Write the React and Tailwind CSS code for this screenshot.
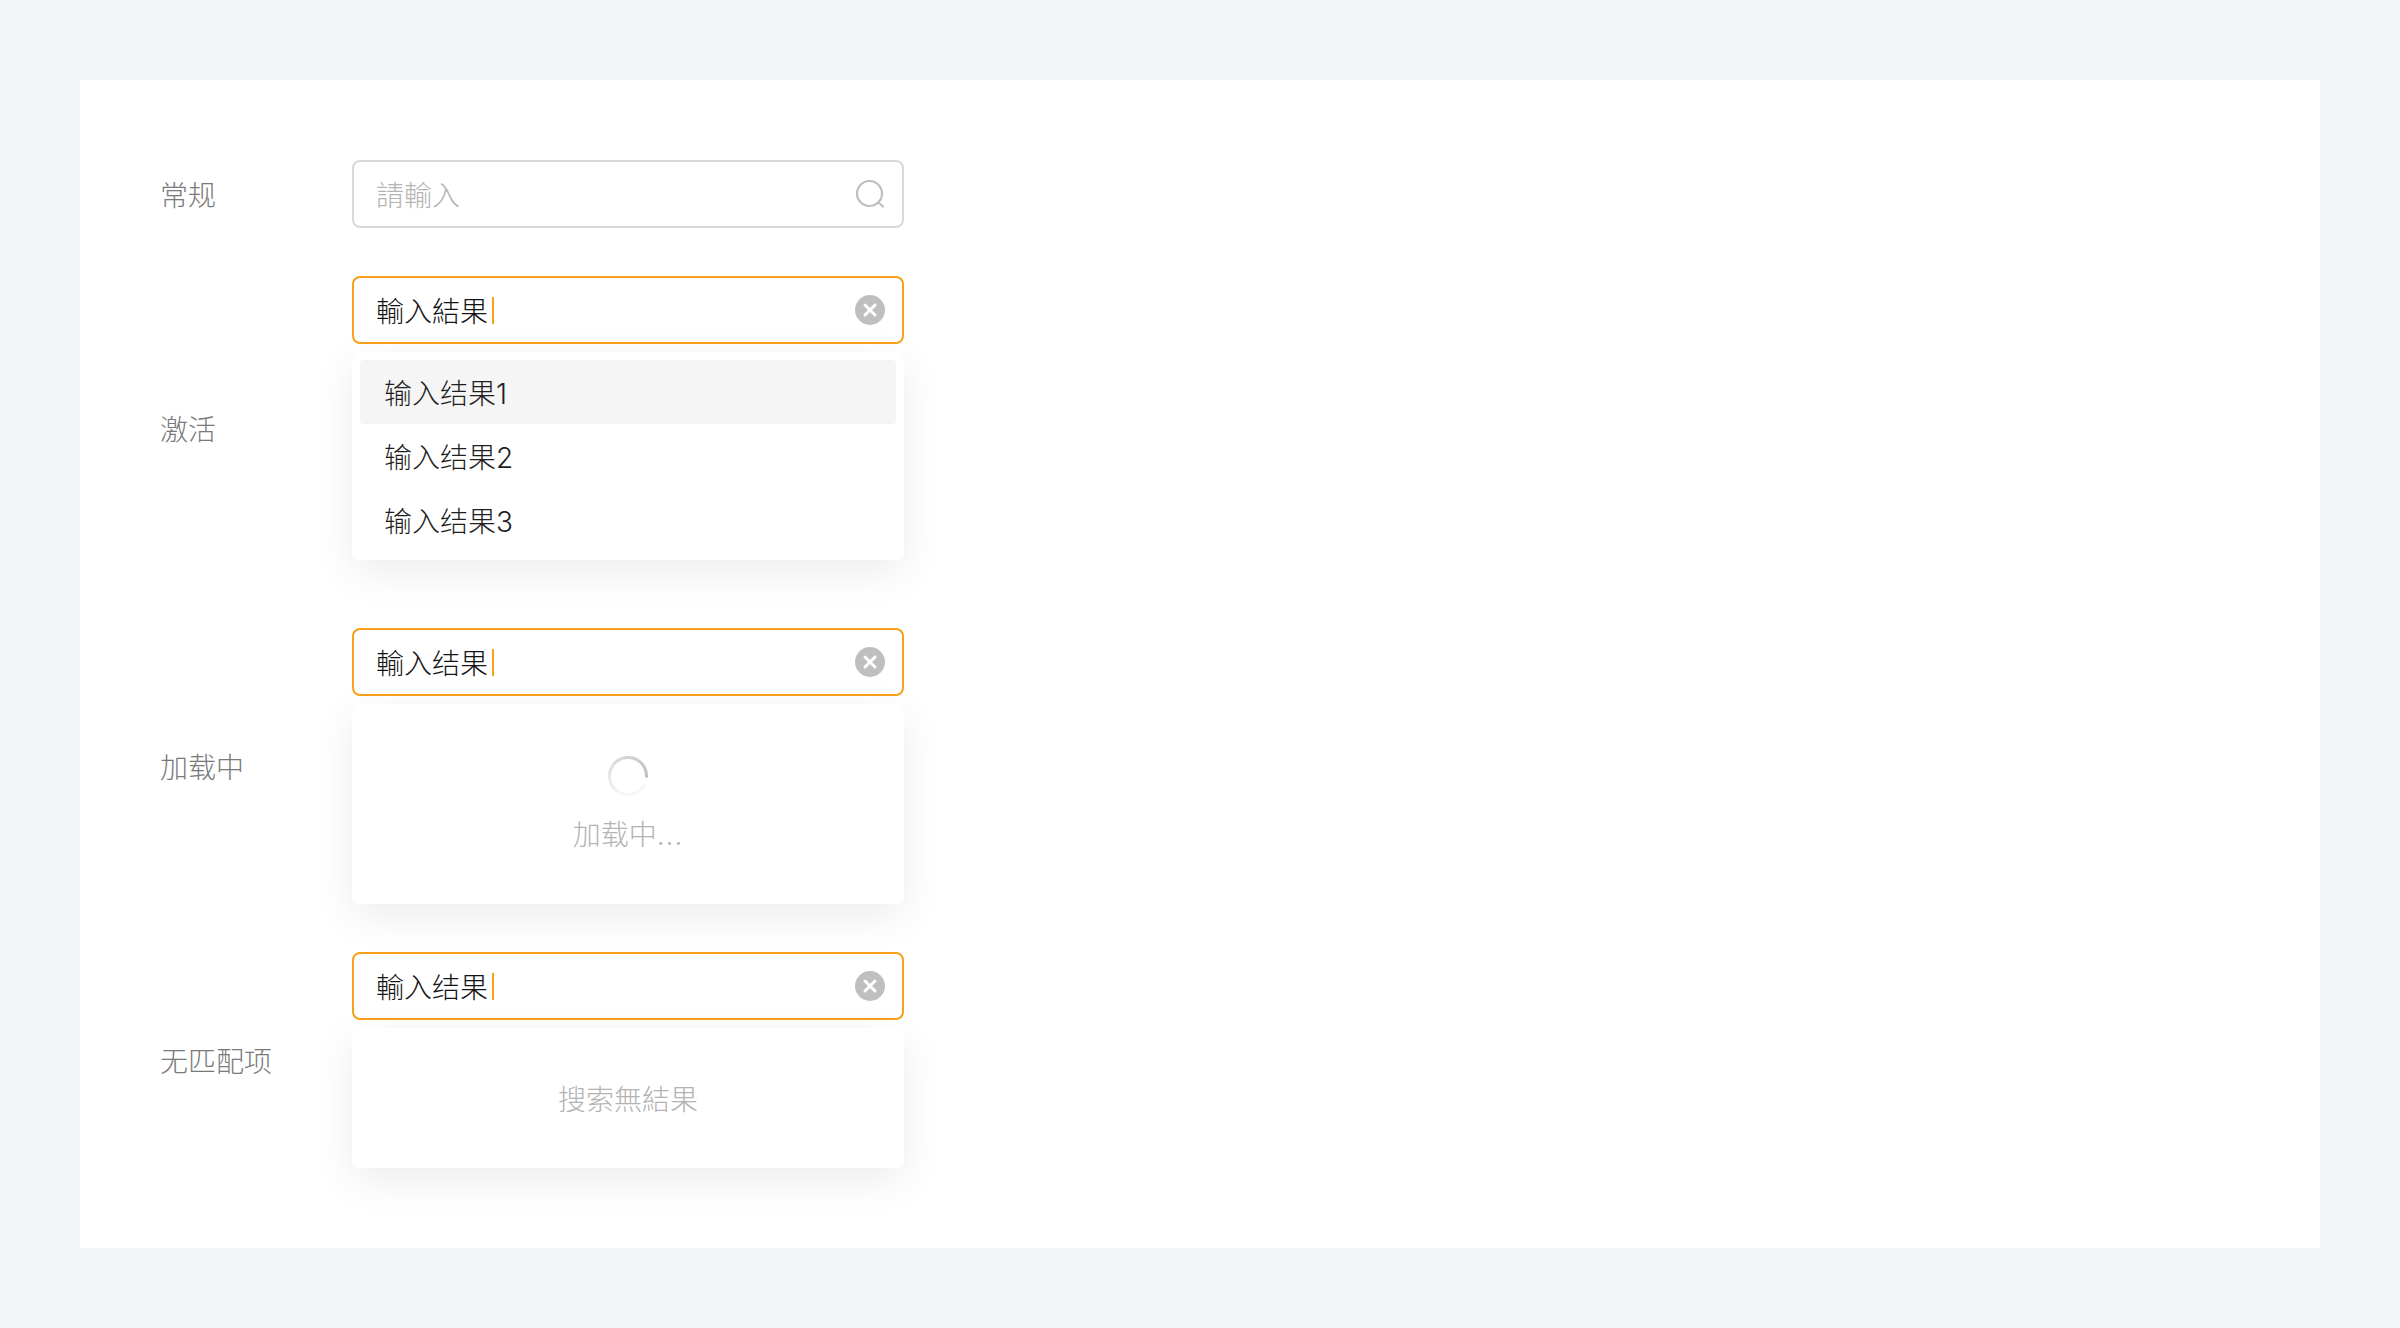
import React from 'react';

const Caret = () => <span className="ml-[4px] inline-block h-[27px] w-[2px] bg-[#fa9f1c]" />;

const SearchIcon = () => (
  <svg width="30" height="30" viewBox="0 0 30 30" fill="none" stroke="#bfbfbf" strokeWidth="2.2" strokeLinecap="round">
    <circle cx="14.5" cy="14.5" r="12.5" />
    <path d="M24 24l4 3.5" />
  </svg>
);

const ClearIcon = () => (
  <svg width="30" height="30" viewBox="0 0 30 30" fill="none">
    <circle cx="15" cy="15" r="15" fill="#bfbfbf" />
    <path d="M10 10l10 10M20 10L10 20" stroke="#fff" strokeWidth="3" strokeLinecap="round" />
  </svg>
);

// 渐变圆环：从右侧逆时针逐段变浅
const Spinner = () => {
  const segments = 36;
  const r = 18.5;
  const point = (deg) => {
    const rad = (deg * Math.PI) / 180;
    return `${(20 + r * Math.cos(rad)).toFixed(2)} ${(20 + r * Math.sin(rad)).toFixed(2)}`;
  };
  return (
    <svg width="40" height="40" viewBox="0 0 40 40" fill="none">
      {[...Array(segments)].map((_, i) => {
        const start = 5 - i * 9.4;
        const end = start - 10;
        return (
          <path
            key={i}
            d={`M${point(start)}A${r} ${r} 0 0 0 ${point(end)}`}
            stroke="#bfbfbf"
            strokeWidth="3"
            opacity={Math.max(0.12, 1 - i / 30)}
          />
        );
      })}
    </svg>
  );
};

const Field = ({ text }) => (
  <div className="flex h-[68px] items-center justify-between rounded-lg border-2 border-[#fa9f1c] bg-white pl-[22px] pr-[17px]">
    <div className="flex items-center text-[#141414]">
      <span className="pt-1">{text}</span>
      <Caret />
    </div>
    <ClearIcon />
  </div>
);

const Panel = ({ children, className = '' }) => (
  <div className={`mt-2 rounded-lg bg-white shadow-[0_12px_40px_rgba(0,0,0,0.08)] ${className}`}>{children}</div>
);

const Row = ({ label, children }) => (
  <div className="flex items-center">
    <div className="w-[192px] pt-1 text-[#7a7a7a]">{label}</div>
    <div className="w-[552px]">{children}</div>
  </div>
);

const Option = ({ active, children }) => (
  <div className={`flex h-16 items-center rounded px-6 pt-1 text-[#1f1f1f] ${active ? 'bg-[#f5f5f5]' : ''}`}>{children}</div>
);

export default function App() {
  return (
    <div className="min-h-screen bg-[#f4f5f7] p-20 font-['Inter','Noto_Sans_CJK_SC',sans-serif] text-[28px] font-light leading-[44px]">
      <div className="flex flex-col gap-12 bg-white p-20">
        <Row label="常规">
          <div className="flex h-[68px] items-center justify-between rounded-lg border-2 border-[#d9d9d9] bg-white pl-[22px] pr-[17px]">
            <span className="pt-1 text-[#b3b3b3]">請輸入</span>
            <SearchIcon />
          </div>
        </Row>

        <Row label="激活">
          <div className="pb-5">
            <Field text="輸入結果" />
            <Panel className="p-2">
              <Option active>输入结果1</Option>
              <Option>输入结果2</Option>
              <Option>输入结果3</Option>
            </Panel>
          </div>
        </Row>

        <Row label="加载中">
          <Field text="輸入结果" />
          <Panel className="flex h-[200px] flex-col items-center pt-[52px]">
            <Spinner />
            <div className="mt-[17px] text-[#b3b3b3]">
              加载中<span className="tracking-[1px]">...</span>
            </div>
          </Panel>
        </Row>

        <Row label="无匹配项">
          <Field text="輸入结果" />
          <Panel className="flex h-[140px] items-center justify-center pt-1 text-[#b3b3b3]">搜索無結果</Panel>
        </Row>
      </div>
    </div>
  );
}
